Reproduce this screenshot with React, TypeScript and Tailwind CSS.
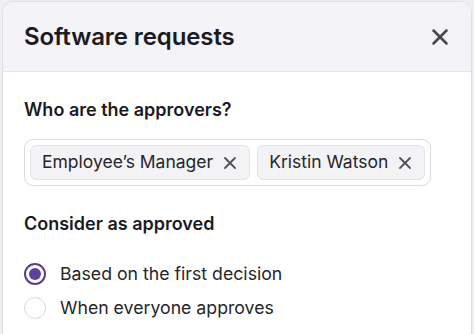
import { X } from "lucide-react";

const APPROVERS = ["Employee’s Manager", "Kristin Watson"];

const OPTIONS = [
  { label: "Based on the first decision", checked: true },
  { label: "When everyone approves", checked: false },
];

export default function App() {
  return (
    <div
      className="w-[474px] h-[334px] overflow-hidden bg-[#efeff2] pt-[1px] px-[2px]"
      style={{ fontFamily: "Inter, 'Noto Sans', sans-serif" }}
    >
      <div className="h-[340px] bg-white border border-[#dedde3] rounded-t-[12px] overflow-hidden">
        {/* Header */}
        <div className="h-[70px] bg-[#f4f3f8] border-b border-[#e6e5ec] flex items-center justify-between pl-[21px] pr-[18px]">
          <h1 className="text-[24px] font-semibold text-[#1b1b1f] tracking-[-0.1px]">Software requests</h1>
          <X className="w-[26px] h-[26px] text-[#45454b]" strokeWidth={2.3} />
        </div>

        {/* Body */}
        <div className="pl-[21px] pt-[26px]">
          <h2 className="text-[18px] leading-[24px] font-semibold text-[#1b1b1f]">Who are the approvers?</h2>

          <div className="mt-[17px] w-[407px] h-[47px] border border-[#dcdce1] rounded-[9px] p-[5px] flex gap-[7px]">
            {APPROVERS.map((a) => (
              <span
                key={a}
                className="shrink-0 whitespace-nowrap h-[35px] inline-flex items-center gap-[7px] pl-[11px] pr-[9px] bg-[#f3f3f6] border border-[#e3e3e8] rounded-[6px] text-[17.5px] text-[#26262b]"
              >
                {a}
                <X className="w-[20px] h-[20px] text-[#505056]" strokeWidth={2.2} />
              </span>
            ))}
          </div>

          <h2 className="mt-[26px] text-[18px] leading-[24px] font-semibold text-[#1b1b1f]">Consider as approved</h2>

          <div className="mt-[27px] flex flex-col gap-[12px]">
            {OPTIONS.map((o) => (
              <label key={o.label} className="flex items-center gap-[14px] h-[22px]">
                {o.checked ? (
                  <span className="w-[22px] h-[22px] rounded-full border-2 border-[#5a3d94] flex items-center justify-center">
                    <span className="w-[12px] h-[12px] rounded-full bg-[#5e3f9c]" />
                  </span>
                ) : (
                  <span className="w-[22px] h-[22px] rounded-full border-[1.5px] border-[#dadade]" />
                )}
                <span className="text-[17.7px] text-[#26262b]">{o.label}</span>
              </label>
            ))}
          </div>
        </div>
      </div>
    </div>
  );
}
